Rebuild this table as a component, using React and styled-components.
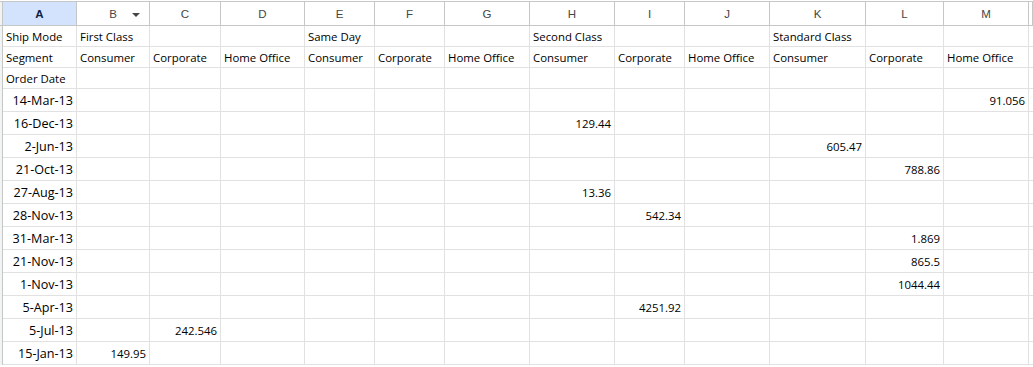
import React from "react";
import styled, { createGlobalStyle } from "styled-components";

const GlobalStyle = createGlobalStyle`
  html, body {
    margin: 0;
    padding: 0;
    background: #fff;
  }
`;

const columns = [
  { key: "A", width: 74 },
  { key: "B", width: 73, filter: true },
  { key: "C", width: 71 },
  { key: "D", width: 84 },
  { key: "E", width: 70 },
  { key: "F", width: 70 },
  { key: "G", width: 85 },
  { key: "H", width: 85 },
  { key: "I", width: 70 },
  { key: "J", width: 85 },
  { key: "K", width: 96 },
  { key: "L", width: 78 },
  { key: "M", width: 85 },
];

const template = `3px ${columns.map((c) => c.width + "px").join(" ")} 1fr`;

const labelRows = [
  ["Ship Mode", "First Class", "", "", "Same Day", "", "", "Second Class", "", "", "Standard Class", "", ""],
  ["Segment", "Consumer", "Corporate", "Home Office", "Consumer", "Corporate", "Home Office", "Consumer", "Corporate", "Home Office", "Consumer", "Corporate", "Home Office"],
  ["Order Date", "", "", "", "", "", "", "", "", "", "", "", ""],
];

const dataRows = [
  { date: "14-Mar-13", col: "M", value: "91.056" },
  { date: "16-Dec-13", col: "H", value: "129.44" },
  { date: "2-Jun-13", col: "K", value: "605.47" },
  { date: "21-Oct-13", col: "L", value: "788.86" },
  { date: "27-Aug-13", col: "H", value: "13.36" },
  { date: "28-Nov-13", col: "I", value: "542.34" },
  { date: "31-Mar-13", col: "L", value: "1.869" },
  { date: "21-Nov-13", col: "L", value: "865.5" },
  { date: "1-Nov-13", col: "L", value: "1044.44" },
  { date: "5-Apr-13", col: "I", value: "4251.92" },
  { date: "5-Jul-13", col: "C", value: "242.546" },
  { date: "15-Jan-13", col: "B", value: "149.95" },
];

const Sheet = styled.div`
  width: 1033px;
  height: 367px;
  overflow: hidden;
  padding-top: 1px;
  box-sizing: border-box;
  background: #fff;
`;

const HeaderRow = styled.div`
  display: grid;
  grid-template-columns: ${template};
  height: 25px;
  border-top: 1px solid #c4c7c5;
  border-bottom: 1px solid #c4c7c5;
  box-sizing: border-box;
`;

const Row = styled.div`
  display: grid;
  grid-template-columns: ${template};
  height: ${({ tall }) => (tall ? "23px" : "21px")};
`;

const Stub = styled.div`
  background: #f1f3f4;
  border-right: 1px solid #c4c7c5;
  box-sizing: border-box;
`;

const ColHead = styled.div`
  display: flex;
  align-items: center;
  justify-content: center;
  position: relative;
  padding-top: 1px;
  border-right: 1px solid #c4c7c5;
  box-sizing: border-box;
  background: ${({ selected }) => (selected ? "#d3e3fd" : "#fff")};
  color: ${({ selected }) => (selected ? "#0b1f44" : "#444746")};
  font-family: "Liberation Sans", Arial, sans-serif;
  font-size: 11.5px;
  font-weight: ${({ selected }) => (selected ? 700 : 400)};
`;

const FilterArrow = styled.span`
  position: absolute;
  right: 9px;
  top: 11px;
  width: 0;
  height: 0;
  border-left: 4px solid transparent;
  border-right: 4px solid transparent;
  border-top: 4px solid #444746;
`;

const Cell = styled.div`
  display: flex;
  align-items: center;
  justify-content: ${({ align }) => (align === "right" ? "flex-end" : "flex-start")};
  padding: 2px 3px 0 3px;
  border-right: 1px solid #e1e1e1;
  border-bottom: 1px solid #e1e1e1;
  box-sizing: border-box;
  overflow: hidden;
  white-space: nowrap;
  color: #000;
  font-family: "Open Sans", "Segoe UI", sans-serif;
  font-size: ${({ big }) => (big ? "12.6px" : "11.4px")};
  line-height: 1;
`;

export default function App() {
  return (
    <>
      <GlobalStyle />
      <Sheet>
        <HeaderRow>
          <Stub />
          {columns.map((c) => (
            <ColHead key={c.key} selected={c.key === "A"}>
              {c.key}
              {c.filter && <FilterArrow />}
            </ColHead>
          ))}
          <ColHead />
        </HeaderRow>

        {labelRows.map((row, i) => (
          <Row key={i}>
            <Stub />
            {row.map((text, j) => (
              <Cell key={j}>{text}</Cell>
            ))}
            <Cell />
          </Row>
        ))}

        {dataRows.map((r) => (
          <Row key={r.date} tall>
            <Stub />
            <Cell big align="right">
              {r.date}
            </Cell>
            {columns.slice(1).map((c) => (
              <Cell key={c.key} align="right">
                {c.key === r.col ? r.value : ""}
              </Cell>
            ))}
            <Cell />
          </Row>
        ))}
      </Sheet>
    </>
  );
}
